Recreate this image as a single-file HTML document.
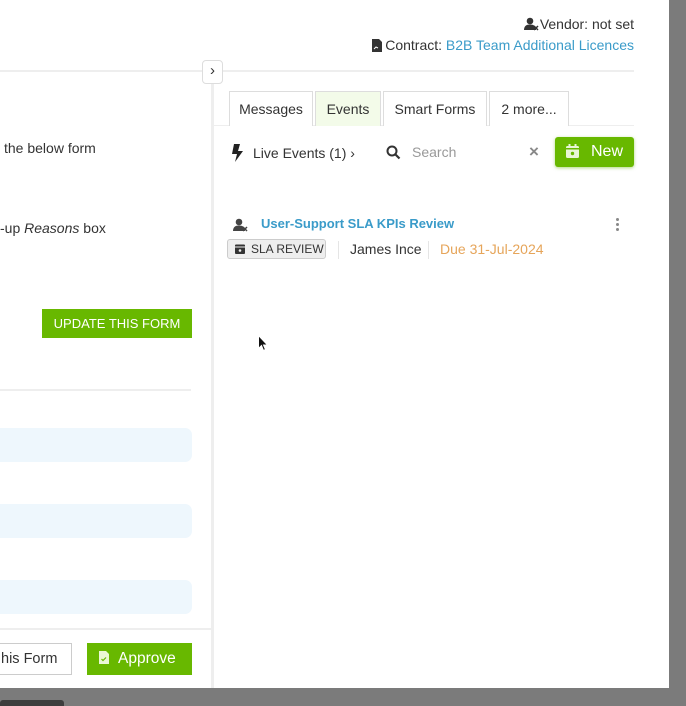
<!DOCTYPE html>
<html><head><meta charset="utf-8"><style>
*{box-sizing:border-box;margin:0;padding:0}
body{width:686px;height:706px;overflow:hidden;background:#7b7b7b;font-family:"Liberation Sans",sans-serif;color:#333;position:relative}
.a{position:absolute}
.panel{left:0;top:0;width:669px;height:688px;background:#fff}
.t{font-size:14px;color:#333;white-space:nowrap}
.tab{top:91px;height:35px;border:1px solid #ddd;border-bottom:none;background:#fff;font-size:14px;text-align:center;line-height:34px}
.box{left:0;width:192px;height:34px;background:#eef7fd;border-radius:0 7px 7px 0}
</style></head><body>
<div class="a panel"></div>
<div class="a t" style="right:52px;top:16px;font-size:14px">
<svg width="16" height="14" viewBox="0 0 16 14" style="vertical-align:-2px"><circle cx="6" cy="4" r="3.3" fill="#333"/><path d="M0 13c0-4 2.5-5.5 6-5.5s6 1.5 6 5.5z" fill="#333"/><path d="M10 9l4 4M14 9l-4 4" stroke="#333" stroke-width="1.5"/></svg>Vendor: not set</div>
<div class="a t" style="right:52px;top:37px;font-size:14px">
<svg width="10" height="13" viewBox="0 0 10 13" style="vertical-align:-2px;margin-right:3px"><path d="M0 0h7l3 3v10H0z" fill="#333"/><path d="M2 10l2-2 2 1" stroke="#fff" stroke-width="1" fill="none"/></svg>Contract: <span style="color:#3a9bc9">B2B Team Additional Licences</span></div>
<div class="a" style="left:0;top:70px;width:634px;height:2px;background:#eee"></div>
<div class="a" style="left:211px;top:72px;width:3px;height:616px;background:#eee"></div>
<div class="a" style="left:202px;top:60px;width:21px;height:24px;background:#fff;border:1px solid #ddd;border-radius:4px;text-align:center;line-height:20px;font-size:15px">›</div>
<div class="a t" style="left:4px;top:140px">the below form</div>
<div class="a t" style="left:0;top:220px">-up <i>Reasons</i> box</div>
<div class="a" style="left:42px;top:309px;width:150px;height:29px;background:#68b800;color:#fff;font-size:13px;text-align:center;line-height:29px;white-space:nowrap">UPDATE THIS FORM</div>
<div class="a" style="left:0;top:389px;width:191px;height:2px;background:#eee"></div>
<div class="a box" style="top:428px"></div>
<div class="a box" style="top:504px"></div>
<div class="a box" style="top:580px"></div>
<div class="a" style="left:0;top:628px;width:212px;height:2px;background:#eee"></div>
<div class="a" style="left:-2px;top:643px;width:74px;height:32px;border:1px solid #ccc;font-size:14.5px;line-height:30px;padding-left:2px;white-space:nowrap">his Form</div>
<div class="a" style="left:87px;top:643px;width:105px;height:32px;background:#68b800;color:#fff;font-size:15.5px;line-height:32px;padding-left:12px;white-space:nowrap">
<svg width="10" height="13" viewBox="0 0 10 13" style="vertical-align:-1px;margin-right:9px"><path d="M0 0h7l3 3v10H0z" fill="#eaf7d6"/><path d="M2.5 8l1.5 1.5 3-3" stroke="#68b800" stroke-width="1.2" fill="none"/></svg>Approve</div>
<div class="a" style="left:214px;top:125px;width:420px;height:1px;background:#eee"></div>
<div class="a tab" style="left:229px;width:84px">Messages</div>
<div class="a tab" style="left:315px;width:66px;background:#f3fbe9">Events</div>
<div class="a tab" style="left:383px;width:104px">Smart Forms</div>
<div class="a tab" style="left:489px;width:80px">2 more...</div>
<div class="a t" style="left:231px;top:144px;font-size:14px">
<svg width="12" height="18" viewBox="0 0 12 18" style="vertical-align:-4px;margin-right:10px"><path d="M3 0h6L7 7h5L4 18l2-8H1z" fill="#222"/></svg>Live Events (1) ›</div>
<svg class="a" style="left:386px;top:145px" width="15" height="15" viewBox="0 0 15 15"><circle cx="6" cy="6" r="4.5" stroke="#333" stroke-width="2" fill="none"/><path d="M9.5 9.5l4 4" stroke="#333" stroke-width="2.2"/></svg>
<div class="a t" style="left:412px;top:144px;color:#999">Search</div>
<div class="a t" style="left:529px;top:142px;color:#888;font-size:17px;font-weight:bold">×</div>
<div class="a" style="left:555px;top:137px;width:79px;height:30px;background:#68b800;border-radius:3px;color:#fff;font-size:16px;line-height:30px;padding-left:11px;white-space:nowrap;box-shadow:0 1px 3px rgba(100,180,0,.5)">
<svg width="13" height="14" viewBox="0 0 13 14" style="vertical-align:-2px;margin-right:12px"><rect x="0" y="2" width="13" height="12" rx="1.5" fill="#e9f6d7"/><rect x="2.5" y="0" width="2" height="3" fill="#e9f6d7"/><rect x="8.5" y="0" width="2" height="3" fill="#e9f6d7"/><rect x="0" y="4" width="13" height="1.5" fill="#68b800"/><circle cx="6.5" cy="9.5" r="1.7" fill="#68b800"/></svg>New</div>
<svg class="a" style="left:233px;top:218px" width="16" height="14" viewBox="0 0 16 14"><circle cx="6" cy="4" r="3.3" fill="#444"/><path d="M0 13c0-4 2.5-5.5 6-5.5s6 1.5 6 5.5z" fill="#444"/><path d="M10 9l4 4M14 9l-4 4" stroke="#444" stroke-width="1.5"/></svg>
<div class="a t" style="left:261px;top:216px;color:#3a9bc9;font-size:13px;font-weight:bold">User-Support SLA KPIs Review</div>
<div class="a" style="left:616px;top:218px;width:3px;height:3px;border-radius:50%;background:#888;box-shadow:0 5px 0 #888,0 10px 0 #888"></div>
<div class="a" style="left:227px;top:239px;width:99px;height:20px;background:#eee;border:1px solid #ccc;border-radius:3px;font-size:12px;line-height:18px;padding-left:7px;color:#333;white-space:nowrap">
<svg width="10" height="11" viewBox="0 0 10 11" style="vertical-align:-1px;margin-right:6px"><rect x="0" y="1.5" width="10" height="9.5" rx="1" fill="#333"/><rect x="0" y="3.5" width="10" height="1" fill="#eee"/><circle cx="5" cy="7.5" r="1.3" fill="#eee"/></svg>SLA REVIEW</div>
<div class="a" style="left:338px;top:241px;width:1px;height:18px;background:#e5e5e5"></div>
<div class="a t" style="left:350px;top:241px">James Ince</div>
<div class="a" style="left:428px;top:241px;width:1px;height:18px;background:#e5e5e5"></div>
<div class="a t" style="left:440px;top:241px;color:#e6a55a">Due 31-Jul-2024</div>
<svg class="a" style="left:258px;top:335px" width="10" height="17" viewBox="0 0 10 17"><path d="M0.5 0.5v13l3-3 2 5 2-1-2-4.5h4z" fill="#111" stroke="#fff" stroke-width="1"/></svg>
<div class="a" style="left:0;top:700px;width:64px;height:6px;background:#3d3d3d;border-radius:3px 3px 0 0"></div>
</body></html>
